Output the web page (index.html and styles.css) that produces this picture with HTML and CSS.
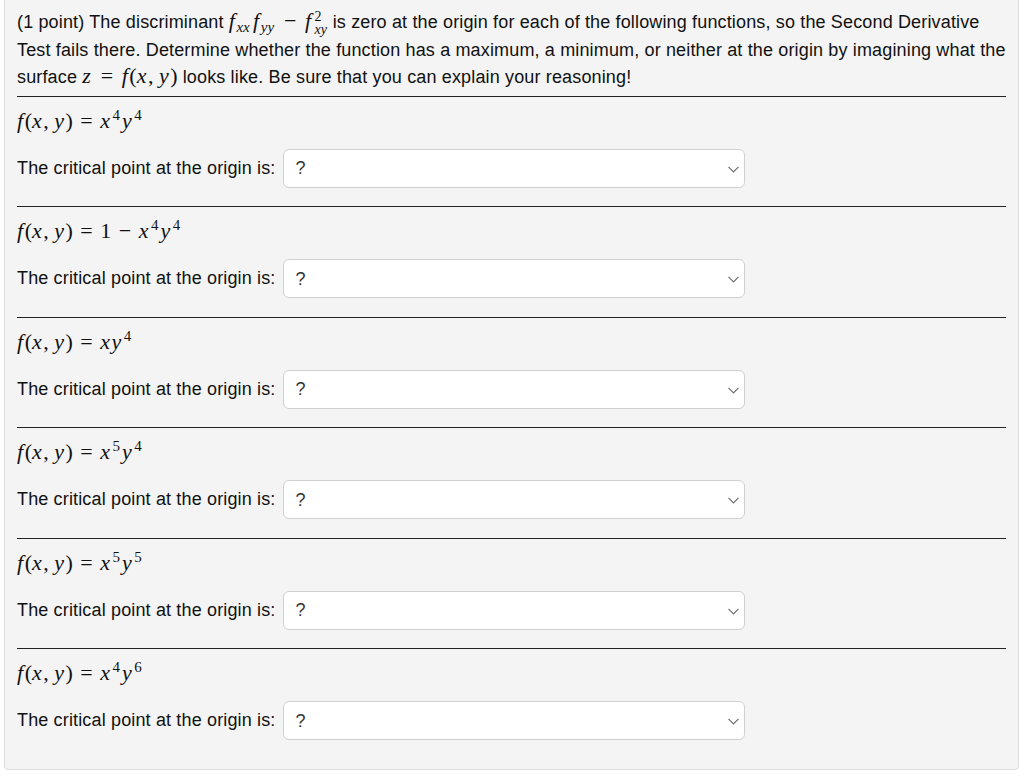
FILE: index.html
```html
<!DOCTYPE html>
<html>
<head>
<meta charset="utf-8">
<link rel="stylesheet" href="styles.css">
</head>
<body>
<div class="panel">
  <p class="intro">(1 point) The discriminant <span class="m"><i>f</i><sub><i>xx</i></sub>&#8202;<i>f</i><sub><i>yy</i></sub> <span class="op">&minus;</span> <i>f</i><span class="ss"><span class="sp">2</span><span class="sb"><i>xy</i></span></span></span> is zero at the origin for each of the following functions, so the Second Derivative<br>Test fails there. Determine whether the function has a maximum, a minimum, or neither at the origin by imagining what the<br>surface <span class="m"><i>z</i> <span class="op">=</span> <i>f</i>(<i>x</i>, <i>y</i>)</span> looks like. Be sure that you can explain your reasoning!</p>

  <div class="item">
    <div class="func"><i>f</i>(<i>x</i>, <i>y</i>) <span class="op">=</span> <i>x</i><sup>4</sup><i>y</i><sup>4</sup></div>
    <div class="row"><span class="label">The critical point at the origin is:</span><div class="sel"><select><option>?</option><option>a local minimum</option><option>a local maximum</option><option>a saddle point</option></select><svg class="chev" width="11" height="7" viewBox="0 0 11 7"><polyline points="0.5,0.8 5.5,5.8 10.5,0.8" fill="none" stroke="#6e6e6e" stroke-width="1.2"/></svg></div></div>
  </div>

  <div class="item">
    <div class="func"><i>f</i>(<i>x</i>, <i>y</i>) <span class="op">=</span> 1 <span class="op">&minus;</span> <i>x</i><sup>4</sup><i>y</i><sup>4</sup></div>
    <div class="row"><span class="label">The critical point at the origin is:</span><div class="sel"><select><option>?</option><option>a local minimum</option><option>a local maximum</option><option>a saddle point</option></select><svg class="chev" width="11" height="7" viewBox="0 0 11 7"><polyline points="0.5,0.8 5.5,5.8 10.5,0.8" fill="none" stroke="#6e6e6e" stroke-width="1.2"/></svg></div></div>
  </div>

  <div class="item">
    <div class="func"><i>f</i>(<i>x</i>, <i>y</i>) <span class="op">=</span> <i>x</i><i>y</i><sup>4</sup></div>
    <div class="row"><span class="label">The critical point at the origin is:</span><div class="sel"><select><option>?</option><option>a local minimum</option><option>a local maximum</option><option>a saddle point</option></select><svg class="chev" width="11" height="7" viewBox="0 0 11 7"><polyline points="0.5,0.8 5.5,5.8 10.5,0.8" fill="none" stroke="#6e6e6e" stroke-width="1.2"/></svg></div></div>
  </div>

  <div class="item">
    <div class="func"><i>f</i>(<i>x</i>, <i>y</i>) <span class="op">=</span> <i>x</i><sup>5</sup><i>y</i><sup>4</sup></div>
    <div class="row"><span class="label">The critical point at the origin is:</span><div class="sel"><select><option>?</option><option>a local minimum</option><option>a local maximum</option><option>a saddle point</option></select><svg class="chev" width="11" height="7" viewBox="0 0 11 7"><polyline points="0.5,0.8 5.5,5.8 10.5,0.8" fill="none" stroke="#6e6e6e" stroke-width="1.2"/></svg></div></div>
  </div>

  <div class="item">
    <div class="func"><i>f</i>(<i>x</i>, <i>y</i>) <span class="op">=</span> <i>x</i><sup>5</sup><i>y</i><sup>5</sup></div>
    <div class="row"><span class="label">The critical point at the origin is:</span><div class="sel"><select><option>?</option><option>a local minimum</option><option>a local maximum</option><option>a saddle point</option></select><svg class="chev" width="11" height="7" viewBox="0 0 11 7"><polyline points="0.5,0.8 5.5,5.8 10.5,0.8" fill="none" stroke="#6e6e6e" stroke-width="1.2"/></svg></div></div>
  </div>

  <div class="item last">
    <div class="func"><i>f</i>(<i>x</i>, <i>y</i>) <span class="op">=</span> <i>x</i><sup>4</sup><i>y</i><sup>6</sup></div>
    <div class="row"><span class="label">The critical point at the origin is:</span><div class="sel"><select><option>?</option><option>a local minimum</option><option>a local maximum</option><option>a saddle point</option></select><svg class="chev" width="11" height="7" viewBox="0 0 11 7"><polyline points="0.5,0.8 5.5,5.8 10.5,0.8" fill="none" stroke="#6e6e6e" stroke-width="1.2"/></svg></div></div>
  </div>
</div>
</body>
</html>
```
FILE: styles.css
```css
html, body {
  margin: 0;
  padding: 0;
  background: #ffffff;
}
body {
  padding: 0 5px 0 4px;
  font-family: "Liberation Sans", Arial, sans-serif;
  font-size: 18px;
  letter-spacing: 0.15px;
  color: #111;
}
.panel {
  margin-top: -4px;
  background: #f4f4f4;
  border: 1px solid #dcdcdc;
  border-radius: 4px;
  padding: 12px 12px 29px 12px;
}
.intro {
  margin: 0 0 4px;
  line-height: 27.5px;
  height: 82.5px;
  white-space: nowrap;
}
.m {
  font-family: "Liberation Serif", "Times New Roman", serif;
  font-size: 22px;
  line-height: 0;
  letter-spacing: 0;
}
.m i, .func i {
  font-style: italic;
  padding-right: 1.5px;
}
.m sub {
  font-size: 15px;
  line-height: 0;
  vertical-align: -4px;
  margin-right: 1px;
}
.m sub i {
  padding-right: 0.5px;
}
.ss {
  display: inline-block;
  vertical-align: -6px;
  font-size: 14px;
  line-height: 13px;
  margin-left: 2px;
}
.sp, .sb {
  display: block;
}
.sb i {
  padding-right: 0.5px;
}
.op {
  font-style: normal;
  padding: 0 3px;
}
.func .op {
  padding: 0 2px;
}
.item {
  border-top: 1px solid #222;
  padding: 12px 0 18.5px;
}
.item.last {
  padding-bottom: 0;
}
.func {
  font-family: "Liberation Serif", "Times New Roman", serif;
  font-size: 22px;
  line-height: 24px;
  height: 24px;
  letter-spacing: 0;
  color: #111;
}
.func sup {
  font-size: 15px;
  line-height: 0;
  vertical-align: 8px;
  margin: 0 2px 0 1px;
}
.row {
  margin-top: 16px;
  display: flex;
  align-items: center;
  gap: 7px;
}
.label {
  white-space: nowrap;
}
.sel {
  position: relative;
  width: 462px;
  height: 39px;
}
.sel select {
  appearance: none;
  -webkit-appearance: none;
  width: 100%;
  height: 100%;
  box-sizing: border-box;
  background: #fff;
  border: 1px solid #d0d0d0;
  border-radius: 6px;
  padding: 0 0 0 12px;
  font-family: "Liberation Sans", Arial, sans-serif;
  font-size: 18px;
  color: #333;
  margin: 0;
}
.chev {
  position: absolute;
  right: 6px;
  top: 17px;
  pointer-events: none;
}
```
